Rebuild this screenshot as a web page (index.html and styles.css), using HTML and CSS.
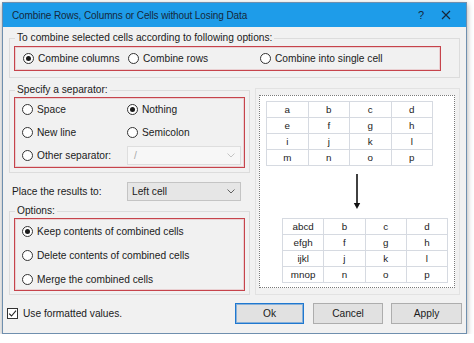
FILE: index.html
```html
<!DOCTYPE html>
<html lang="en">
<head>
    <meta charset="UTF-8">
    <title>Combine Rows, Columns or Cells without Losing Data</title>
    <link rel="stylesheet" href="styles.css">
</head>
<body>
    <div class="window">
        <div class="titlebar">
            <span class="title">Combine Rows, Columns or Cells without Losing Data</span>
            <span class="help">?</span>
            <span class="close">
                <svg width="10" height="10" viewBox="0 0 10 10"><path d="M1 1 L9 9 M9 1 L1 9" stroke="#17283a" stroke-width="1.2" fill="none"/></svg>
            </span>
        </div>

        <fieldset class="group group-mode">
            <legend>To combine selected cells according to following options:</legend>
            <div class="redbox mode-row">
                <label class="radio"><span class="dot on"></span>Combine columns</label>
                <label class="radio"><span class="dot"></span>Combine rows</label>
                <label class="radio"><span class="dot"></span>Combine into single cell</label>
            </div>
        </fieldset>

        <div class="middle">
            <div class="left-col">
                <fieldset class="group group-sep">
                    <legend>Specify a separator:</legend>
                    <div class="redbox sep-grid">
                        <label class="radio"><span class="dot"></span>Space</label>
                        <label class="radio"><span class="dot on"></span>Nothing</label>
                        <label class="radio"><span class="dot"></span>New line</label>
                        <label class="radio"><span class="dot"></span>Semicolon</label>
                        <label class="radio"><span class="dot"></span>Other separator:</label>
                        <div class="combo disabled">
                            <span>/</span>
                            <svg width="8" height="5" viewBox="0 0 8 5"><path d="M0.5 0.5 L4 4 L7.5 0.5" stroke="#c4c4c4" fill="none"/></svg>
                        </div>
                    </div>
                </fieldset>

                <div class="place-row">
                    <span class="place-label">Place the results to:</span>
                    <div class="combo">
                        <span>Left cell</span>
                        <svg width="8" height="5" viewBox="0 0 8 5"><path d="M0.5 0.5 L4 4 L7.5 0.5" stroke="#606060" fill="none"/></svg>
                    </div>
                </div>

                <fieldset class="group group-opts">
                    <legend>Options:</legend>
                    <div class="redbox opts-list">
                        <label class="radio"><span class="dot on"></span>Keep contents of combined cells</label>
                        <label class="radio"><span class="dot"></span>Delete contents of combined cells</label>
                        <label class="radio"><span class="dot"></span>Merge the combined cells</label>
                    </div>
                </fieldset>
            </div>

            <div class="panel">
                <div class="preview">
                    <table class="grid grid-before">
                        <tr><td>a</td><td>b</td><td>c</td><td>d</td></tr>
                        <tr><td>e</td><td>f</td><td>g</td><td>h</td></tr>
                        <tr><td>i</td><td>j</td><td>k</td><td>l</td></tr>
                        <tr><td>m</td><td>n</td><td>o</td><td>p</td></tr>
                    </table>
                    <svg class="arrow" width="10" height="36" viewBox="0 0 10 36">
                        <path d="M5 0 L5 31" stroke="#111" stroke-width="1.6"/>
                        <polygon points="1.8,29 8.2,29 5,35" fill="#111"/>
                    </svg>
                    <table class="grid grid-after">
                        <tr><td>abcd</td><td>b</td><td>c</td><td>d</td></tr>
                        <tr><td>efgh</td><td>f</td><td>g</td><td>h</td></tr>
                        <tr><td>ijkl</td><td>j</td><td>k</td><td>l</td></tr>
                        <tr><td>mnop</td><td>n</td><td>o</td><td>p</td></tr>
                    </table>
                </div>
            </div>
        </div>

        <div class="footer">
            <label class="checkbox">
                <span class="box">
                    <svg width="9" height="9" viewBox="0 0 9 9"><path d="M1.2 4.6 L3.5 7 L8 1.6" stroke="#222" stroke-width="1.1" fill="none"/></svg>
                </span>
                Use formatted values.
            </label>
            <div class="buttons">
                <button class="btn btn-default">Ok</button>
                <button class="btn btn-cancel">Cancel</button>
                <button class="btn btn-apply">Apply</button>
            </div>
        </div>
    </div>
</body>
</html>
```

FILE: styles.css
```css
* {
    box-sizing: border-box;
}
body {
    margin: 0;
    background: #fff;
    font-family: "Liberation Sans", Arial, sans-serif;
    font-size: 10.2px;
    color: #1b1b1b;
}
.window {
    margin: 2px 0 0 2px;
    width: 465px;
    border: 1px solid #6f8fae;
    background: #f1f1f1;
    box-shadow: 0 2px 6px rgba(0,0,0,0.35);
    padding-bottom: 9px;
}
.titlebar {
    display: flex;
    align-items: center;
    height: 24px;
    background: #1e9ce9;
    color: #15283b;
    padding-left: 9px;
    padding-right: 5px;
}
.title {
    font-size: 10px;
    letter-spacing: -0.1px;
}
.help {
    margin-left: auto;
    width: 20px;
    text-align: center;
    font-size: 11px;
}
.close {
    width: 30px;
    display: flex;
    justify-content: center;
    align-items: center;
}

/* group boxes */
.group {
    margin: 0;
    padding: 0 4px 6px;
    border: 1px solid #dcdcdc;
    min-width: 0;
}
.group legend {
    padding: 0 2px;
    margin-left: 1px;
    line-height: 14px;
}
.redbox {
    border: 1px solid #c6434b;
    box-shadow: inset 0 0 0 1px rgba(214, 110, 118, 0.25);
}
.group-mode {
    margin: 4px 6px 0;
}
.mode-row {
    margin-top: 1px;
    height: 25px;
    width: 427px;
    display: flex;
    align-items: center;
    padding-left: 8px;
}
.mode-row .radio:nth-child(1) {
    width: 105px;
}
.mode-row .radio:nth-child(2) {
    width: 132px;
}

.radio {
    display: flex;
    align-items: center;
    gap: 4px;
}
.dot {
    width: 11px;
    height: 11px;
    border: 1px solid #333;
    border-radius: 50%;
    background: #fff;
    display: flex;
    align-items: center;
    justify-content: center;
    flex-shrink: 0;
}
.dot.on::after {
    content: "";
    width: 5px;
    height: 5px;
    border-radius: 50%;
    background: #1a1a1a;
}

.middle {
    display: flex;
    align-items: flex-start;
    margin: 0 6px;
}
.left-col {
    width: 241px;
}
.group-sep {
    margin-top: 5px;
    padding-bottom: 4px;
}
.sep-grid {
    display: grid;
    grid-template-columns: 105px 1fr;
    grid-template-rows: repeat(3, 23px);
    align-items: center;
    padding-left: 7px;
}
.combo {
    width: 114px;
    height: 19px;
    border: 1px solid #c4c4c4;
    background: #e6e6e6;
    display: flex;
    align-items: center;
    justify-content: space-between;
    padding: 0 5px 0 4px;
}
.combo.disabled {
    background: #f7f7f7;
    border-color: #dedede;
    color: #a8a8a8;
    padding-left: 6px;
}
.place-row {
    display: flex;
    align-items: center;
    margin-top: 9px;
    padding-left: 3px;
}
.place-label {
    width: 115px;
}
.group-opts {
    margin-top: 3px;
    padding-bottom: 3px;
}
.opts-list {
    height: 73px;
    display: grid;
    grid-template-rows: repeat(3, 24px);
    align-items: center;
    padding-left: 7px;
}

/* preview */
.panel {
    margin: 10px 0 0 5px;
    width: 205px;
    border: 1px solid #e2e2e2;
    padding: 6px 4px 6px 3px;
}
.preview {
    width: 196px;
    height: 193px;
    border: 1px dotted #7a7a7a;
    background: #fff;
}
.grid {
    border-collapse: collapse;
    table-layout: fixed;
    font-size: 9.8px;
    color: #222;
}
.grid td {
    border: 1px solid #d6dae1;
    height: 16px;
    padding: 0;
    text-align: center;
    line-height: 1;
}
.grid-before {
    width: 167px;
    margin: 5px 0 0 6px;
}
.grid-after {
    width: 166px;
    margin: 8px 0 0 22px;
}
.arrow {
    display: block;
    margin: 8px 0 0 92px;
}

/* footer */
.footer {
    display: flex;
    align-items: center;
    margin-top: 8px;
    padding: 0 4px;
    height: 21px;
}
.checkbox {
    display: flex;
    align-items: center;
    gap: 5px;
}
.box {
    width: 11px;
    height: 11px;
    border: 1px solid #333;
    background: #fff;
    display: flex;
    align-items: center;
    justify-content: center;
}
.buttons {
    margin-left: auto;
    display: flex;
}
.btn {
    height: 21px;
    background: #e1e1e1;
    border: 1px solid #adadad;
    font-family: "Liberation Sans", Arial, sans-serif;
    font-size: 10.2px;
    color: #1b1b1b;
    padding: 0;
}
.btn-default {
    width: 69px;
    border-color: #1f78d0;
    box-shadow: inset 0 0 0 1px rgba(31, 120, 208, 0.45);
}
.btn-cancel {
    width: 70px;
    margin-left: 9px;
}
.btn-apply {
    width: 71px;
    margin-left: 8px;
}
```
